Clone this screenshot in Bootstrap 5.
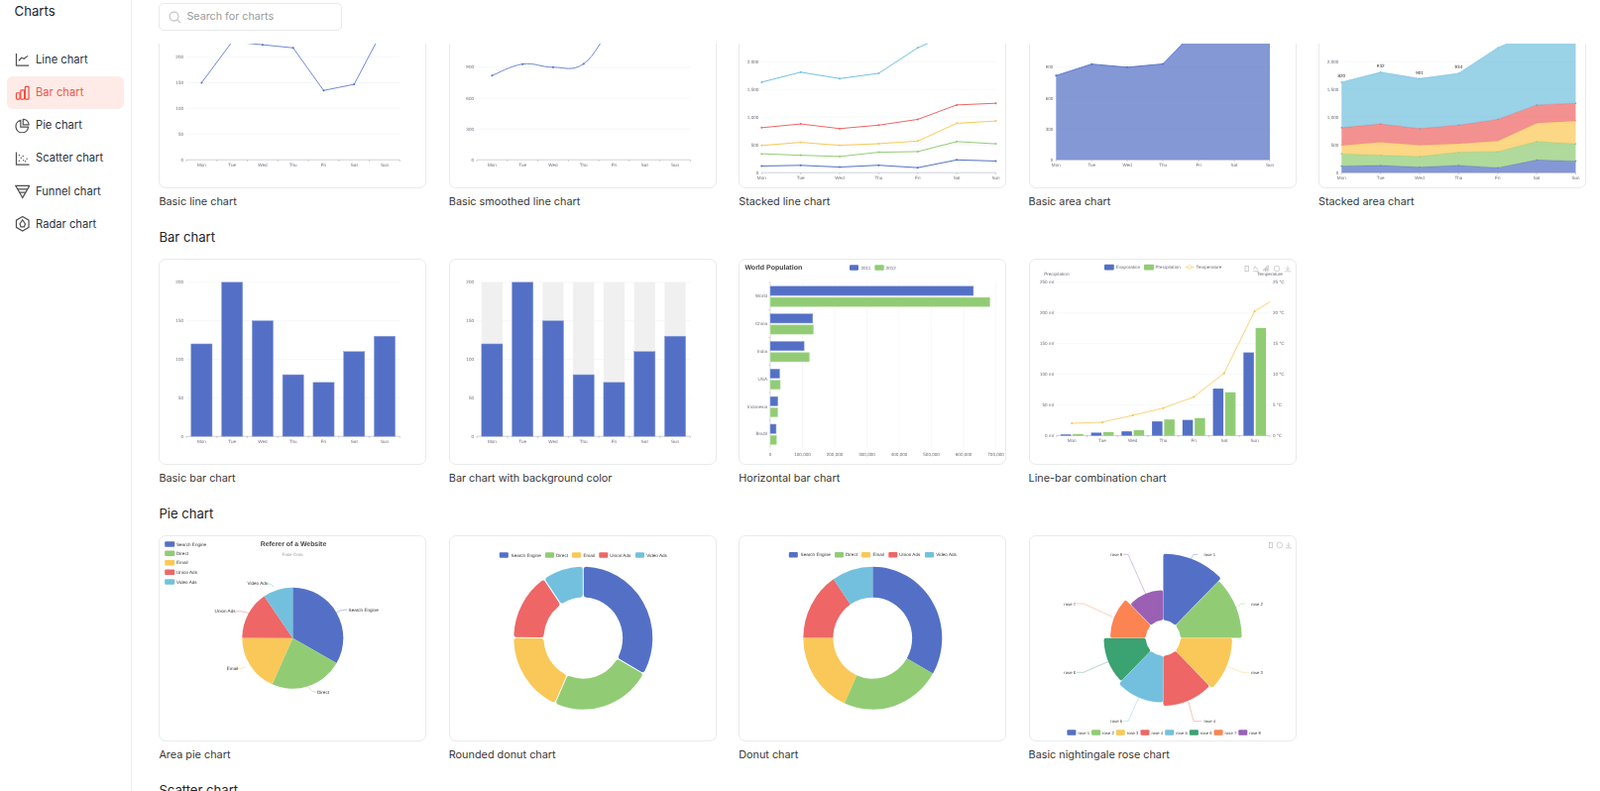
<!DOCTYPE html>
<html lang="en">
<head>
<meta charset="utf-8">
<title>Charts</title>
<link rel="stylesheet" href="https://cdn.jsdelivr.net/npm/bootstrap@5.3.0/dist/css/bootstrap.min.css">
<style>
html,body{height:100%;}
body{font-family:"Inter","Liberation Sans",sans-serif;color:#2b2b2b;background:#fff;overflow:hidden;}
.side-rail{width:133px;flex:none;border-right:1px solid #eceef0;padding:1px 7px 0;}
.side-title{font-size:13.2px;line-height:20px;font-weight:400;color:#1c2430;margin:0 0 22.6px 7.5px;}
.side-link{display:flex;align-items:center;gap:6px;height:33.2px;padding:0 0 0 7.5px;font-size:11.2px;color:#2c3440;border-radius:6px;text-decoration:none;}
.side-link svg{width:15.5px;height:15.5px;flex:none;fill:none;stroke:#505050;stroke-width:1.25;}
.side-link.active-item{background:#feebe7;color:#f5564a;}
.side-link.active-item svg{stroke:#f5493d;}
.top-strip{height:44px;flex:none;padding:3px 0 0 27.4px;}
.find-box{width:185px;height:28px;border:1px solid #e8e9eb;border-radius:5px;padding:0 8px 0 9px;gap:5px;}
.find-box svg{width:13px;height:13px;flex:none;fill:none;stroke:#c4c4c4;stroke-width:1.3;}
.find-input{border:0;outline:0;padding:0;width:100%;font-size:10.75px;color:#333;background:transparent;}
.find-input::placeholder{color:#9b9b9b;opacity:1;}
.scroll-pane{flex:1;overflow:hidden;min-height:0;padding:0 14px 0 27.4px;}
.scroll-inner{margin-top:-93.8px;}
.group-block{height:279px;}
.group-title{font-size:13.1px;line-height:20px;font-weight:400;color:#242424;margin:0 0 12px;}
.tile-row{--bs-gutter-x:22.4px;--bs-gutter-y:0;}
.tile-box{width:270px;height:207.8px;border:1px solid #e9eaec;border-radius:7px;overflow:hidden;background:#fff;}
.tile-box svg{display:block;width:268px;height:205px;font-family:"Liberation Sans",sans-serif;text-rendering:geometricPrecision;filter:blur(.3px);}
.tile-name{font-size:10.85px;line-height:18px;margin-top:4px;color:#383838;white-space:nowrap;}
</style>
</head>
<body class="d-flex">
<aside class="side-rail">
  <h1 class="side-title">Charts</h1>
  <nav class="nav flex-column">
    <a class="side-link" href="#"><svg viewBox="0 0 16 16"><path d="M1.500 2V14.500H14.500"/><path d="M4 9.500 7 6.500 9.500 7.500 13.500 4.500"/></svg>Line chart</a>
    <a class="side-link active-item" href="#"><svg viewBox="0 0 16 16"><rect x="1.500" y="8" width="3.800" height="6.500" rx=".8"/><rect x="6.100" y="5" width="3.800" height="9.500" rx=".8"/><rect x="10.700" y="1.500" width="3.800" height="13" rx=".8"/></svg>Bar chart</a>
    <a class="side-link" href="#"><svg viewBox="0 0 16 16"><path d="M6 2.500A6.500 6.500 0 1 0 14 9.500H6Z"/><path d="M8.500 1.500A5.500 5.500 0 0 1 14.500 7H8.500Z"/></svg>Pie chart</a>
    <a class="side-link" href="#"><svg viewBox="0 0 16 16"><path d="M1.500 1.500V14.500H15"/><path stroke-width="1.400" stroke-linecap="round" d="M4.500 4.500v.1M6.500 7.500v.1M4.500 10.500v.1M9 10v.1M11 11v.1M8.500 5.500v.1M12.500 8.500v.1"/></svg>Scatter chart</a>
    <a class="side-link" href="#"><svg viewBox="0 0 16 16"><path d="M.8 2.500H15.200L8 15Z"/><path d="M3 6H13M5 9.500H11"/></svg>Funnel chart</a>
    <a class="side-link" href="#"><svg viewBox="0 0 16 16"><path d="M8 .5 14.500 4.250V11.750L8 15.500 1.500 11.750V4.250Z"/><path d="M8 4 10.800 8 9.800 11.300H6.200L5.200 8Z"/></svg>Radar chart</a>
  </nav>
</aside>
<main class="flex-grow-1 d-flex flex-column" style="min-width:0">
  <div class="top-strip">
    <div class="find-box d-flex align-items-center">
      <svg viewBox="0 0 14 14"><circle cx="6" cy="6" r="4.800"/><path d="M9.500 9.500 13 13"/></svg>
      <input class="find-input" type="text" placeholder="Search for charts">
    </div>
  </div>
  <div class="scroll-pane">
    <div class="scroll-inner">
      <section class="group-block">
        <h2 class="group-title">Line chart</h2>
        <div class="row row-cols-5 tile-row">
          <div class="col"><div class="card tile-box"><svg id="c1" viewBox="1 1 268 205"></svg></div><div class="tile-name">Basic line chart</div></div>
          <div class="col"><div class="card tile-box"><svg id="c2" viewBox="1 1 268 205"></svg></div><div class="tile-name">Basic smoothed line chart</div></div>
          <div class="col"><div class="card tile-box"><svg id="c3" viewBox="1 1 268 205"></svg></div><div class="tile-name">Stacked line chart</div></div>
          <div class="col"><div class="card tile-box"><svg id="c4" viewBox="1 1 268 205"></svg></div><div class="tile-name">Basic area chart</div></div>
          <div class="col"><div class="card tile-box"><svg id="c5" viewBox="1 1 268 205"></svg></div><div class="tile-name">Stacked area chart</div></div>
        </div>
      </section>
      <section class="group-block">
        <h2 class="group-title">Bar chart</h2>
        <div class="row row-cols-5 tile-row">
          <div class="col"><div class="card tile-box"><svg id="c6" viewBox="1 1 268 205"></svg></div><div class="tile-name">Basic bar chart</div></div>
          <div class="col"><div class="card tile-box"><svg id="c7" viewBox="1 1 268 205"></svg></div><div class="tile-name">Bar chart with background color</div></div>
          <div class="col"><div class="card tile-box"><svg id="c8" viewBox="1 1 268 205"></svg></div><div class="tile-name">Horizontal bar chart</div></div>
          <div class="col"><div class="card tile-box"><svg id="c9" viewBox="1 1 268 205"></svg></div><div class="tile-name">Line-bar combination chart</div></div>
        </div>
      </section>
      <section class="group-block">
        <h2 class="group-title">Pie chart</h2>
        <div class="row row-cols-5 tile-row">
          <div class="col"><div class="card tile-box"><svg id="c10" viewBox="1 1 268 205"></svg></div><div class="tile-name">Area pie chart</div></div>
          <div class="col"><div class="card tile-box"><svg id="c11" viewBox="1 1 268 205"></svg></div><div class="tile-name">Rounded donut chart</div></div>
          <div class="col"><div class="card tile-box"><svg id="c12" viewBox="1 1 268 205"></svg></div><div class="tile-name">Donut chart</div></div>
          <div class="col"><div class="card tile-box"><svg id="c13" viewBox="1 1 268 205"></svg></div><div class="tile-name">Basic nightingale rose chart</div></div>
        </div>
      </section>
      <section class="group-block">
        <h2 class="group-title">Scatter chart</h2>
      </section>
    </div>
  </div>
</main>
<script src="https://cdn.jsdelivr.net/npm/bootstrap@5.3.0/dist/js/bootstrap.bundle.min.js"></script>
<script>
const C={b:'#5470c6',g:'#91cc75',y:'#fac858',r:'#ee6666',c:'#73c0de',d:'#3ba272',o:'#fc8452',p:'#9a60b4'};
const days=['Mon','Tue','Wed','Thu','Fri','Sat','Sun'];
const T=(x,y,s,a='middle',f='#6e7079',z=4.6,w='400')=>`<text x="${x}" y="${y}" text-anchor="${a}" fill="${f}" font-size="${z}" font-weight="${w}" dominant-baseline="central">${s}</text>`;
const L=(x1,y1,x2,y2,c,w=.6)=>`<line x1="${x1}" y1="${y1}" x2="${x2}" y2="${y2}" stroke="${c}" stroke-width="${w}"/>`;
const R=(x,y,w,h,f,extra='')=>`<rect x="${x}" y="${y}" width="${w}" height="${h}" fill="${f}" ${extra}/>`;
const P=(pts,c,w=1)=>`<polyline points="${pts.map(p=>p.join(',')).join(' ')}" fill="none" stroke="${c}" stroke-width="${w}" stroke-linejoin="round"/>`;
const Dots=(pts,c,r=1)=>pts.map(p=>`<circle cx="${p[0]}" cy="${p[1]}" r="${r}" fill="${c}"/>`).join('');
const set=(id,s)=>{document.getElementById(id).innerHTML=s;};
function grid(o){
  const g={...o};
  g.ys=v=>o.b-(o.b-o.t)*v/o.max;
  const n=days.length, step=o.gap?(o.r-o.l)/n:(o.r-o.l)/(n-1);
  g.xs=i=>o.gap?o.l+step*(i+.5):o.l+step*i;
  g.step=step;
  let s='';
  for(let v=0;v<=o.max;v+=o.stepV){
    const y=g.ys(v);
    if(v>0)s+=L(o.l,y,o.r,y,'#eef1f6');
    s+=T(o.l-3,y,o.fmt?o.fmt(v):v.toLocaleString('en-US'),'end');
  }
  s+=L(o.l,o.b,o.r,o.b,'#c9ccd3',.9);
  const ticks=o.gap?n+1:n;
  for(let i=0;i<ticks;i++){const x=o.l+step*i;s+=L(x,o.b,x,o.b+1.8,'#8d9099',.4);}
  days.forEach((d,i)=>{s+=T(g.xs(i),o.b+4.800,d);});
  g.svg=s;
  return g;
}
function smooth(p){
  let d=`M${p[0][0]} ${p[0][1]}`;
  for(let i=0;i<p.length-1;i++){
    const a=p[i-1]||p[i],b=p[i],c=p[i+1],e=p[i+2]||c,k=.2;
    d+=`C${b[0]+(c[0]-a[0])*k} ${b[1]+(c[1]-a[1])*k} ${c[0]-(e[0]-b[0])*k} ${c[1]-(e[1]-b[1])*k} ${c[0]} ${c[1]}`;
  }
  return d;
}
const base={l:28,r:243.4,t:23.8,b:179.2};
const d5=[820,932,901,934,1290,1330,1320];

/* basic line */
let g=grid({...base,max:300,stepV:50,gap:true});
let pts=[150,230,224,218,135,147,260].map((v,i)=>[g.xs(i),g.ys(v)]);
set('c1',g.svg+P(pts,'#6f87d6')+Dots(pts,C.b));

/* smoothed */
g=grid({...base,max:1500,stepV:300,gap:true});
pts=d5.map((v,i)=>[g.xs(i),g.ys(v)]);
set('c2',g.svg+`<path d="${smooth(pts)}" fill="none" stroke="#6f87d6" stroke-width="1"/>`+Dots(pts,C.b));

/* stacked */
const st=[[120,132,101,134,90,230,210],[220,182,191,234,290,330,310],[150,232,201,154,190,330,410],[320,332,301,334,390,330,320],d5];
const stC=[C.b,C.g,C.y,C.r,C.c];
const cum=st.reduce((a,r)=>{const prev=a[a.length-1]||[0,0,0,0,0,0,0];a.push(r.map((v,i)=>v+prev[i]));return a;},[]);
const st3={l:23.3,r:259.5,t:24.2,b:192.2,max:3000,stepV:500,gap:false};
g=grid(st3);
let s=g.svg;
cum.forEach((r,k)=>{const p=r.map((v,i)=>[g.xs(i),g.ys(v)]);s+=P(p,stC[k],1)+Dots(p,stC[k]);});
set('c3',s);

/* basic area */
g=grid({l:27.3,r:243,t:23.8,b:179.2,max:1500,stepV:300,gap:false});
pts=d5.map((v,i)=>[g.xs(i),g.ys(v)]);
s=`<polygon points="${pts.map(p=>p.join(',')).join(' ')} 243,179.2 27.3,179.2" fill="#5470c6" fill-opacity=".72"/>`;
set('c4',g.svg+s+P(pts,C.b,.9)+Dots(pts,C.b));

/* stacked area */
g=grid(st3);
s=g.svg;
cum.forEach((r,k)=>{
  const p=r.map((v,i)=>[g.xs(i),g.ys(v)]);
  const low=(k?cum[k-1]:[0,0,0,0,0,0,0]).map((v,i)=>[g.xs(i),g.ys(v)]).reverse();
  s+=`<polygon points="${p.concat(low).map(q=>q.join(',')).join(' ')}" fill="${stC[k]}" fill-opacity=".72"/>`+P(p,stC[k],.6)+Dots(p,stC[k],.8);
});
cum[4].forEach((v,i)=>{s+=T(g.xs(i),g.ys(v)-6,d5[i],'middle','#333');});
set('c5',s);

/* bars */
const bars=[120,200,150,80,70,110,130];
function barChart(bg){
  const g=grid({...base,max:200,stepV:50,gap:true});
  let s=g.svg;
  bars.forEach((v,i)=>{
    const w=21.2,x=g.xs(i)-w/2;
    if(bg)s+=R(x,g.t,w,g.b-g.t,'#f0f0f0');
    s+=R(x,g.ys(v),w,g.b-g.ys(v),C.b,'stroke="#8ea0dd" stroke-width=".5"');
  });
  return s;
}
set('c6',barChart(false));
set('c7',barChart(true));

/* horizontal */
s=T(6.4,9.2,'World Population','start','#464646',7,'700');
s+=R(112,6.2,9,5.6,C.b,'rx="1"')+T(123.5,9,'2011','start')+R(137.4,6.2,9.4,5.6,C.g,'rx="1"')+T(148.7,9,'2012','start');
const hb={l:32,r:259.6,t:23.8,b:190.8};
const hx=v=>hb.l+(hb.r-hb.l)*v/700000;
for(let v=0;v<=700000;v+=100000){
  if(v>0)s+=L(hx(v),hb.t,hx(v),hb.b,'#eef1f6');
  s+=T(hx(v),197.5,v.toLocaleString('en-US'));
}
s+=L(hb.l,hb.t,hb.l,hb.b,'#c9ccd3',.7);
const hd=[['World',630230,681807],['China',131744,134141],['India',104970,121594],['USA',29034,31000],['Indonesia',23489,23438],['Brazil',18203,19325]];
const hh=(hb.b-hb.t)/6;
hd.forEach((r,i)=>{
  const y=hb.t+hh*i;
  s+=L(hb.l-1.500,y,hb.l,y,'#8d9099',.4);
  s+=T(hb.l-3,y+hh/2,r[0],'end');
  s+=R(hb.l,y+4,hx(r[1])-hb.l,9.3,C.b,'stroke="#8ea0dd" stroke-width=".5"');
  s+=R(hb.l,y+15.2,hx(r[2])-hb.l,9.3,C.g,'stroke="#bfe3ac" stroke-width=".5"');
});
set('c8',s);

/* line-bar */
g=grid({l:27.8,r:243,t:23.8,b:178.5,max:250,stepV:50,gap:true,fmt:v=>v+' ml'});
s=g.svg;
for(let v=0;v<=25;v+=5)s+=T(246,g.ys(v*10),v+' °C','start');
s+=T(27.800,15.2,'Precipitation')+T(243,15.2,'Temperature');
s+=R(76,5.800,9.800,5.600,C.b,'rx="1"')+T(87.7,8.500,'Evaporation','start')+R(116,5.800,10,5.600,C.g,'rx="1"')+T(127.5,8.500,'Precipitation','start');
s+=L(157.6,8.500,166.3,8.500,C.y,.7)+`<circle cx="162" cy="8.500" r="1.800" fill="#fff" stroke="${C.y}" stroke-width=".6"/>`+T(168.6,8.500,'Temperature','start');
const ev=[2,4.9,7,23.2,25.6,76.7,135.6],pr=[2.6,5.9,9,26.4,28.7,70.7,175.6],tp=[2,2.2,3.3,4.5,6.3,10.2,20.3];
days.forEach((d,i)=>{
  const c=g.xs(i);
  s+=R(c-11.3,g.ys(ev[i]),10.500,g.b-g.ys(ev[i]),C.b);
  s+=R(c+1,g.ys(pr[i]),10.500,g.b-g.ys(pr[i]),C.g);
});
pts=tp.map((v,i)=>[g.xs(i),g.ys(v*10)]);
s+=P(pts.concat([[243,43.5]]),'#f9cd66',.9)+Dots(pts,'#f6c04f',1);
const tool=(x,y,i)=>{
  const st='fill="none" stroke="#9a9a9a" stroke-width=".45"';
  if(i==0)return `<rect x="${x-1.700}" y="${y-2.800}" width="3.400" height="5.600" ${st}/>`;
  if(i==1)return `<path d="M${x-2.500} ${y+2.500}H${x+2.500}M${x-2.500} ${y+1}L${x-1} ${y-2.500}L${x+.5} ${y}L${x+2.500} ${y+1}" ${st}/>`;
  if(i==2)return `<path d="M${x-2.500} ${y+2.800}V${y+.5}H${x-.8}V${y+2.800}M${x-.8} ${y+2.800}V${y-1}H${x+.8}V${y+2.800}M${x+.8} ${y+2.800}V${y-2.800}H${x+2.500}V${y+2.800}" ${st}/>`;
  if(i==3)return `<circle cx="${x}" cy="${y}" r="2.800" ${st}/>`;
  return `<path d="M${x} ${y-2.800}V${y+1.500}M${x-2} ${y-.5}L${x} ${y+1.500}L${x+2} ${y-.5}M${x-3} ${y+2.800}H${x+3}" ${st}/>`;
};
[219.7,229,239.2,250,261].forEach((x,i)=>{s+=tool(x,10,i);});
set('c9',s);

/* pies */
const names=['Search Engine','Direct','Email','Union Ads','Video Ads'];
const pc=[C.b,C.g,C.y,C.r,C.c];
const vals=[1048,735,580,484,300],tot=vals.reduce((a,b)=>a+b,0);
const cx=135.300,cy=103.700;
const pol=(r,a,x=cx,y=cy)=>[(x+r*Math.sin(a*Math.PI/180)).toFixed(2),(y-r*Math.cos(a*Math.PI/180)).toFixed(2)];
const angs=[];{let a=0;vals.forEach(v=>{angs.push([a,a+v/tot*360]);a+=v/tot*360;});}
const ringPath=(R1,r1,a0,a1)=>{
  const big=a1-a0>180?1:0,p=pol(R1,a0),q=pol(R1,a1);
  if(!r1)return `M${cx} ${cy}L${p}A${R1} ${R1} 0 ${big} 1 ${q}Z`;
  const m=pol(r1,a1),n=pol(r1,a0);
  return `M${p}A${R1} ${R1} 0 ${big} 1 ${q}L${m}A${r1} ${r1} 0 ${big} 0 ${n}Z`;
};
const roundSec=(R1,r1,a0,a1,rho,gap,f)=>{
  const Ro=R1-rho,Ri=r1+rho,d0=Math.asin((rho+gap)/Ro)*180/Math.PI,d1=Math.asin((rho+gap)/Ri)*180/Math.PI;
  const big=a1-a0-2*d0>180?1:0,big2=a1-a0-2*d1>180?1:0;
  return `<path d="M${pol(Ro,a0+d0)}A${Ro} ${Ro} 0 ${big} 1 ${pol(Ro,a1-d0)}L${pol(Ri,a1-d1)}A${Ri} ${Ri} 0 ${big2} 0 ${pol(Ri,a0+d1)}Z" fill="${f}" stroke="${f}" stroke-width="${2*rho}" stroke-linejoin="round"/>`;
};
const squeeze=x=>`<g transform="translate(${cx} 0) scale(.972 1) translate(${-cx} 0)">${x}</g>`;
const hLegend=y=>{
  const rx=[50.800,97,124,151.300,188],tx=[62.600,108,135.400,162.300,199.200];
  return names.map((n,i)=>R(rx[i],y-2.800,9,5.600,pc[i],'rx="1"')+T(tx[i],y,n,'start','#333')).join('');
};
/* area pie */
s=T(136,9.7,'Referer of a Website','middle','#464646',6.900,'700')+T(135,19.3,'Fake Data','middle','#aaa');
[9,18.3,27.7,37.3,47].forEach((y,i)=>{s+=R(6.200,y-2.700,10,5.400,pc[i],'rx="1"')+T(18,y,names[i],'start','#333');});
angs.forEach((a,i)=>{s+=`<path d="${ringPath(51,0,a[0],a[1])}" fill="${pc[i]}"/>`;});
const pl=[['M178.500 78.500Q183 75 190 75',pc[0]],['M152 153Q153 158 159 158',pc[1]],['M88 133Q84 134.700 78 134.700',pc[2]],['M91 79Q88 76.700 78 76.700',pc[3]],['M116 52Q114 48.700 110 48.700',pc[4]]];
pl.forEach(p=>{s+=`<path d="${p[0]}" fill="none" stroke="${p[1]}" stroke-width=".45"/>`;});
s+=T(191.6,75,names[0],'start','#333')+T(160,158,names[1],'start','#333')+T(68.800,134.700,names[2],'start','#333')+T(56.600,76.700,names[3],'start','#333')+T(89.500,48.700,names[4],'start','#333');
set('c10',s);
/* rounded donut */
s=hLegend(20);
s+=squeeze(angs.map((a,i)=>roundSec(72,41,a[0],a[1],2.800,.5,pc[i])).join(''));
set('c11',s);
/* donut */
s=hLegend(19.700);
s+=squeeze(angs.map((a,i)=>`<path d="${ringPath(72,41,a[0],a[1])}" fill="${pc[i]}"/>`).join(''));
set('c12',s);
/* rose */
const rv=[40,38,32,30,28,26,22,18],rc=[C.b,C.g,C.y,C.r,C.c,C.d,C.o,C.p];
s='';
const rl=[[176.4,19.3,'start','170.500,19.300 166,19.300 162,26'],[224.2,69,'start','218.500,69 214,69 209,73'],[224.2,138.3,'start','222,138.300 215,138.300 201,132.700'],[176.4,187.7,'start','174,187.700 166,187.700 161,168'],[94,187.7,'end','95,187.700 100,187.700 110.600,164'],[47,138.3,'end','48,138.300 55,138.300 80.500,127.300'],[47,69,'end','48,69 55,69 84.300,82.300'],[94,19.3,'end','95,19.300 100,19.300 118,60']];
rl.forEach((r,i)=>{s+=`<polyline points="${r[3]}" fill="none" stroke="${rc[i]}" stroke-width=".4"/>`+T(r[0],r[1],'rose '+(i+1),r[2],'#333',4.2);});
s+=squeeze(rv.map((v,i)=>roundSec(18+67*v/40,18,i*45,(i+1)*45,2,.15,rc[i])).join(''));
rc.forEach((c,i)=>{const x=38.400+i*24.7;s+=R(x,196.200,9,5.600,c,'rx="1"')+T(x+11,199,'rose '+(i+1),'start','#333',4.2);});
[244,252.8,261.800].forEach((x,i)=>{s+=tool(x,10,i==0?0:i+2);});
set('c13',s);
</script>
</body>
</html>
